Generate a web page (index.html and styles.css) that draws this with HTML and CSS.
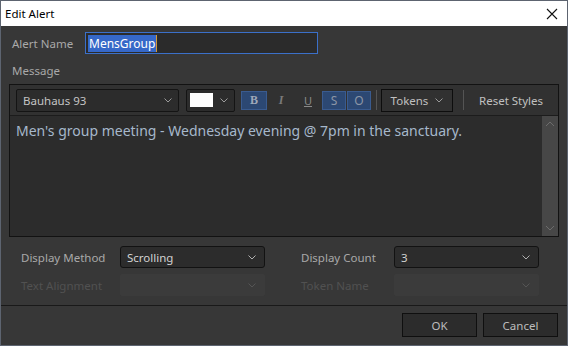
FILE: index.html
```html
<!DOCTYPE html>
<html>
<head>
<meta charset="utf-8">
<link rel="stylesheet" href="styles.css">
</head>
<body>
<div class="window">
  <div class="titlebar">
    <span class="title">Edit Alert</span>
    <svg class="close" width="12" height="12" viewBox="0 0 12 12"><path d="M1 1L11 11M11 1L1 11" stroke="#111" stroke-width="1.1" fill="none"/></svg>
  </div>
  <div class="content">
    <div class="name-row">
      <span class="label name-label">Alert Name</span>
      <div class="name-input"><span class="sel">MensGroup</span><span class="caret"></span></div>
    </div>
    <div class="label msg-label">Message</div>
    <div class="editor">
      <div class="toolbar">
        <div class="dd font-dd"><span>Bauhaus 93</span><svg class="chev" width="8" height="5" viewBox="0 0 8 5"><path d="M0.5 0.5L4 4L7.5 0.5" stroke="#9a9a9a" fill="none"/></svg></div>
        <div class="dd color-dd"><span class="swatch"></span><svg class="chev" width="8" height="5" viewBox="0 0 8 5"><path d="M0.5 0.5L4 4L7.5 0.5" stroke="#9a9a9a" fill="none"/></svg></div>
        <div class="fmt">
          <span class="fb on b-btn">B</span>
          <span class="fb i-btn">I</span>
          <span class="fb u-btn">U</span>
          <span class="fb on s-btn">S</span>
          <span class="fb on o-btn">O</span>
        </div>
        <span class="sep sep1"></span>
        <div class="tokens">Tokens<svg class="chev" width="8" height="5" viewBox="0 0 8 5"><path d="M0.5 0.5L4 4L7.5 0.5" stroke="#9a9a9a" fill="none"/></svg></div>
        <span class="sep sep2"></span>
        <span class="reset">Reset Styles</span>
      </div>
      <div class="textarea">
        <div class="text">Men's group meeting - Wednesday evening @ 7pm in the sanctuary.</div>
        <div class="scrollbar">
          <svg width="10" height="6" viewBox="0 0 10 6"><path d="M1 5L5 1L9 5" stroke="#6c6c6c" fill="none"/></svg>
          <svg width="10" height="6" viewBox="0 0 10 6"><path d="M1 1L5 5L9 1" stroke="#6c6c6c" fill="none"/></svg>
        </div>
      </div>
    </div>
    <div class="opts">
      <span class="label">Display Method</span>
      <div class="dd sel-dd"><span>Scrolling</span><svg class="chev" width="8" height="5" viewBox="0 0 8 5"><path d="M0.5 0.5L4 4L7.5 0.5" stroke="#b0b0b0" fill="none"/></svg></div>
      <span class="label">Display Count</span>
      <div class="dd sel-dd"><span>3</span><svg class="chev" width="8" height="5" viewBox="0 0 8 5"><path d="M0.5 0.5L4 4L7.5 0.5" stroke="#b0b0b0" fill="none"/></svg></div>
      <span class="label disabled">Text Alignment</span>
      <div class="dd dis-dd"><span></span><svg class="chev" width="8" height="5" viewBox="0 0 8 5"><path d="M0.5 0.5L4 4L7.5 0.5" stroke="#555" fill="none"/></svg></div>
      <span class="label disabled">Token Name</span>
      <div class="dd dis-dd split"><span></span><svg class="chev" width="8" height="5" viewBox="0 0 8 5"><path d="M0.5 0.5L4 4L7.5 0.5" stroke="#555" fill="none"/></svg></div>
    </div>
  </div>
  <div class="footer">
    <div class="btn">OK</div>
    <div class="btn">Cancel</div>
  </div>
</div>
</body>
</html>
```
FILE: styles.css
```css
* { box-sizing: border-box; }
html, body { margin: 0; padding: 0; }
body {
  width: 568px;
  height: 346px;
  font-family: "Noto Sans", "Open Sans", sans-serif;
  font-size: 11.5px;
  overflow: hidden;
}
.window {
  width: 568px;
  height: 346px;
  border: 1px solid #5d6470;
  background: #373737;
  display: flex;
  flex-direction: column;
}
.titlebar {
  height: 25px;
  background: #ffffff;
  display: flex;
  align-items: center;
  justify-content: space-between;
  padding: 0 9px 0 4px;
  flex-shrink: 0;
}
.title { color: #000; font-size: 11.5px; }
.close { display: block; }
.content {
  padding: 6px 8px 0 8px;
  flex: 1;
}
.label { color: #a9a9a9; white-space: nowrap; }
.label.disabled { color: #515151; }
.name-row { display: flex; align-items: center; height: 22px; }
.name-label { width: 76px; padding-left: 3px; }
.name-input {
  width: 233px;
  height: 22px;
  border: 1px solid #3b70c9;
  background: #2b2b2b;
  padding: 1px 2px;
  display: flex;
  align-items: center;
}
.sel {
  background: #3668c8;
  color: #ffffff;
  font-size: 12px;
  line-height: 17px;
  padding: 0 1px;
}
.caret { width: 1px; height: 17px; background: #d49a3c; }
.msg-label { padding-left: 3px; margin-top: 7px; height: 21px; line-height: 20px; }
.editor {
  margin-top: 2px;
  width: 550px;
  height: 153px;
  border: 1px solid #121212;
  display: flex;
  flex-direction: column;
}
.toolbar {
  height: 31px;
  background: #313131;
  border-bottom: 1px solid #1c1c1c;
  display: flex;
  align-items: center;
  padding-left: 6px;
  flex-shrink: 0;
}
.dd {
  display: flex;
  align-items: center;
  justify-content: space-between;
  border: 1px solid #141414;
  border-radius: 2px;
  background: #2c2c2c;
  color: #c4c4c4;
}
.font-dd { width: 163px; height: 23px; padding: 0 6px 0 6px; }
.color-dd { width: 49px; height: 23px; margin-left: 7px; padding: 0 6px 0 3px; }
.swatch { width: 23px; height: 14px; background: #fff; display: block; }
.chev { display: block; }
.fmt { display: flex; gap: 1px; margin-left: 6px; }
.fb {
  height: 19px;
  width: 26px;
  display: flex;
  align-items: center;
  justify-content: center;
  color: #8a8a8a;
  border: 1px solid transparent;
  font-family: "Liberation Serif", serif;
  font-size: 12px;
}
.fb.on { background: #2c4873; border-color: #3a5b8f; }
.b-btn { font-weight: bold; color: #9fa9b8; }
.i-btn { font-style: italic; font-weight: bold; color: #7a7a7a; }
.u-btn { text-decoration: underline; font-family: "Noto Sans", sans-serif; font-size: 11px; }
.s-btn, .o-btn { width: 24px; font-family: "Noto Sans", sans-serif; color: #8c96a6; font-size: 12px; }
.sep { width: 1px; height: 20px; background: #545454; }
.sep1 { margin-left: 5px; }
.tokens {
  margin-left: 4px;
  width: 72px;
  height: 23px;
  border: 1px solid #0d0d0d;
  display: flex;
  align-items: center;
  justify-content: center;
  gap: 7px;
  color: #c0c0c0;
}
.sep2 { margin-left: 10px; }
.reset { margin-left: 15px; color: #c0c0c0; }
.textarea {
  flex: 1;
  background: #2c2c2c;
  display: flex;
  justify-content: space-between;
}
.text {
  color: #a6b8cb;
  font-size: 14px;
  padding: 5px 0 0 6px;
  line-height: 19px;
  white-space: nowrap;
}
.scrollbar {
  width: 16px;
  background: #474747;
  display: flex;
  flex-direction: column;
  justify-content: space-between;
  align-items: center;
  padding: 5px 0 5px 0;
}
.scrollbar svg { display: block; }
.opts {
  display: grid;
  grid-template-columns: 99px 145px 36px 93px 145px;
  grid-auto-rows: 22px;
  row-gap: 6px;
  margin-top: 9px;
  align-items: center;
  padding-left: 12px;
}
.opts > .label:nth-child(3), .opts > .label:nth-child(7) { grid-column: 4; }
.sel-dd, .dis-dd { height: 22px; padding: 0 8px 0 6px; color: #d2d2d2; }
.sel-dd { border-color: #121212; background: #2c2c2c; border-radius: 3px; }
.dis-dd { background: #3b3b3b; border-color: #3b3b3b; }
.footer {
  height: 40px;
  border-top: 1px solid #191919;
  display: flex;
  justify-content: flex-end;
  align-items: flex-start;
  gap: 6px;
  padding: 7px 9px 0 0;
  flex-shrink: 0;
}
.btn {
  width: 75px;
  height: 24px;
  border: 1px solid #0f0f0f;
  background: #2c2c2c;
  color: #bdbdbd;
  display: flex;
  align-items: center;
  justify-content: center;
}
```
